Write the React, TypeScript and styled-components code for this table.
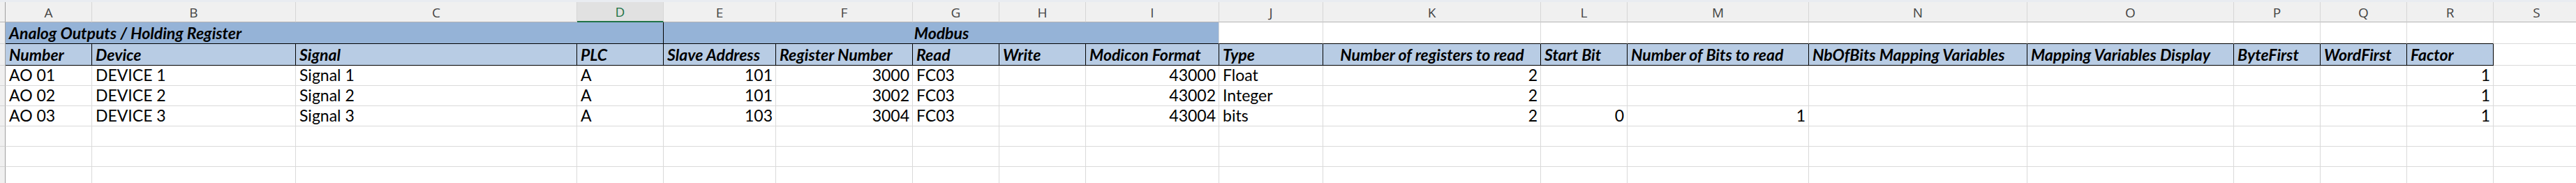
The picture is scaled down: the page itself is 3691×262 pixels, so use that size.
import styled, { createGlobalStyle, css } from "styled-components";

type Align = "left" | "center" | "right";
type Line = "grid" | "black";

interface ICell {
  text?: string;
  span?: number;
  align?: Align;
  fill?: string;
  bold?: boolean;
  right?: Line;
  bottom?: Line;
}

const BAND = "#95b3d7";
const HEAD = "#b8cce4";

const COLS = ["A", "B", "C", "D", "E", "F", "G", "H", "I", "J", "K", "L", "M", "N", "O", "P", "Q", "R", "S"];
const WIDTHS = [124, 292, 403, 124, 161, 196, 124, 124, 191, 149, 312, 124, 260, 313, 296, 124, 124, 124, 124];
const SELECTED = "D";

const HEADERS = [
  "Number",
  "Device",
  "Signal",
  "PLC",
  "Slave Address",
  "Register Number",
  "Read",
  "Write",
  "Modicon Format",
  "Type",
  "Number of registers to read",
  "Start Bit",
  "Number of Bits to read",
  "NbOfBits Mapping Variables",
  "Mapping Variables Display",
  "ByteFirst",
  "WordFirst",
  "Factor",
];

// which columns hold numbers (right aligned)
const NUMERIC = new Set([4, 5, 8, 10, 11, 12, 17]);

const DATA = [
  ["AO 01", "DEVICE 1", "Signal 1", "A", "101", "3000", "FC03", "", "43000", "Float", "2", "", "", "", "", "", "", "1", ""],
  ["AO 02", "DEVICE 2", "Signal 2", "A", "101", "3002", "FC03", "", "43002", "Integer", "2", "", "", "", "", "", "", "1", ""],
  ["AO 03", "DEVICE 3", "Signal 3", "A", "103", "3004", "FC03", "", "43004", "bits", "2", "0", "1", "", "", "", "", "1", ""],
];

const EMPTY_ROWS = 3;

const bandRow: ICell[] = [
  { text: "Analog Outputs / Holding Register", span: 4, fill: BAND, bold: true, right: "black", bottom: "black" },
  { text: "Modbus", span: 5, align: "center", fill: BAND, bold: true, bottom: "black" },
  ...COLS.slice(9, 18).map((): ICell => ({ bottom: "black" })),
  {},
];

const headerRow: ICell[] = [
  ...HEADERS.map(
    (h, i): ICell => ({
      text: h,
      align: i === 10 ? "center" : "left",
      fill: HEAD,
      bold: true,
      right: "black",
      bottom: "black",
    })
  ),
  {},
];

const dataRows: ICell[][] = DATA.map((row) =>
  row.map((v, i): ICell => ({ text: v, align: NUMERIC.has(i) ? "right" : "left" }))
);

const emptyRows: ICell[][] = Array.from({ length: EMPTY_ROWS }, () => COLS.map((): ICell => ({})));

const ROWS = [bandRow, headerRow, ...dataRows, ...emptyRows];
const ROW_HEIGHTS = [31, 31, 29, 29, 29, 29, 29, 29];

const App = (): JSX.Element => {
  return (
    <>
      <GlobalStyle />
      <Sheet>
        <TopStrip />
        <Grid
          $cols={`8px ${WIDTHS.map((w) => `${w}px`).join(" ")}`}
          $rows={`29px ${ROW_HEIGHTS.map((h) => `${h}px`).join(" ")}`}>
          <Corner />
          {COLS.map((c) => (
            <ColHead key={c} $selected={c === SELECTED}>
              {c}
            </ColHead>
          ))}
          {ROWS.map((row, r) => (
            <Row key={r} row={row} />
          ))}
        </Grid>
      </Sheet>
    </>
  );
};

const Row = ({ row }: { row: ICell[] }): JSX.Element => (
  <>
    <RowHead />
    {row.map((cell, i) => (
      <Cell
        key={i}
        $span={cell.span || 1}
        $align={cell.align || "left"}
        $fill={cell.fill}
        $bold={!!cell.bold}
        $right={cell.right || "grid"}
        $bottom={cell.bottom || "grid"}>
        {cell.text}
      </Cell>
    ))}
  </>
);

export default App;

const GlobalStyle = createGlobalStyle`
  html, body {
    margin: 0;
    padding: 0;
    background: #ffffff;
  }
`;

const Sheet = styled.div`
  width: 3691px;
  height: 262px;
  overflow: hidden;
  background: #ffffff;
`;

const TopStrip = styled.div`
  height: 3px;
  background: #e9ecf1;
`;

const Grid = styled.div<{ $cols: string; $rows: string }>`
  display: grid;
  grid-template-columns: ${(p) => p.$cols};
  grid-template-rows: ${(p) => p.$rows};
  width: max-content;
`;

const Corner = styled.div`
  background: #f0f0f0;
  border-right: 1px solid #9f9f9f;
  border-bottom: 1px solid #b4b4b4;
  box-sizing: border-box;
`;

const ColHead = styled.div<{ $selected: boolean }>`
  box-sizing: border-box;
  display: flex;
  align-items: center;
  justify-content: center;
  padding-top: 1px;
  font-family: "Open Sans", "Noto Sans", sans-serif;
  font-size: 19px;
  color: #444444;
  background: #f0f0f0;
  border-right: 1px solid #d6d6d6;
  border-bottom: 1px solid #b4b4b4;

  ${(p) =>
    p.$selected &&
    css`
      background: #e1e1e1;
      color: #217346;
      border-bottom: 2px solid #217346;
    `}
`;

const RowHead = styled.div`
  background: #f0f0f0;
  border-right: 1px solid #9f9f9f;
  border-bottom: 1px solid #d4d4d4;
  box-sizing: border-box;
`;

const Cell = styled.div<{
  $span: number;
  $align: Align;
  $fill?: string;
  $bold: boolean;
  $right: Line;
  $bottom: Line;
}>`
  box-sizing: border-box;
  grid-column: span ${(p) => p.$span};
  display: flex;
  align-items: flex-end;
  justify-content: ${(p) =>
    p.$align === "right" ? "flex-end" : p.$align === "center" ? "center" : "flex-start"};
  padding: 0 4px 3px 5px;
  overflow: visible;
  white-space: nowrap;
  font-family: Lato, "Liberation Sans", sans-serif;
  font-size: 23px;
  line-height: 23px;
  color: #000000;
  background: ${(p) => p.$fill || "transparent"};
  font-weight: ${(p) => (p.$bold ? 700 : 400)};
  font-style: ${(p) => (p.$bold ? "italic" : "normal")};
  border-right: 1px solid ${(p) => (p.$right === "black" ? "#000000" : "#dadada")};
  border-bottom: 1px solid ${(p) => (p.$bottom === "black" ? "#000000" : "#dadada")};
`;
